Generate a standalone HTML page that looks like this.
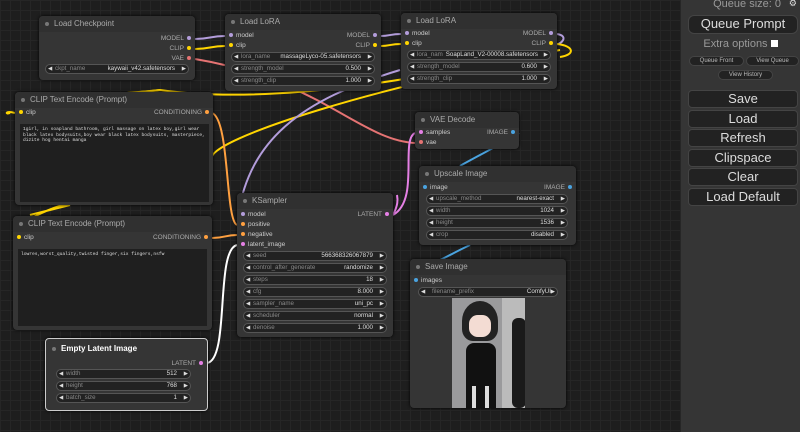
<!DOCTYPE html>
<html><head><meta charset="utf-8">
<style>
*{box-sizing:border-box;margin:0;padding:0}
body{width:800px;height:432px;overflow:hidden;background:#1e1e1e;font-family:"Liberation Sans",sans-serif;position:relative;
background-image:linear-gradient(#262626 1px,transparent 1px),linear-gradient(90deg,#262626 1px,transparent 1px);background-size:10px 10px}
.n{position:absolute;background:#353535;border-radius:4px;box-shadow:0 0 3px #000}
.t{position:absolute;left:0;right:0;top:0;height:16px;background:#303030;border-radius:4px 4px 0 0;color:#aaa;font-size:8px;line-height:16px;padding-left:15px}
.t:before{content:"";position:absolute;left:6px;top:6px;width:4px;height:4px;border-radius:50%;background:#777}
.s{position:absolute;font-size:6.5px;color:#ccc;line-height:8px}
.in{left:4px}.in:before{content:"";display:inline-block;width:4px;height:4px;border-radius:50%;background:var(--c);margin-right:3px;vertical-align:0}
.out{right:4px;color:#aaa}.out:after{content:"";display:inline-block;width:4px;height:4px;border-radius:50%;background:var(--c);margin-left:3px;vertical-align:0}
.w{position:absolute;height:10px;background:#222;border:1px solid #555;border-radius:5px;font-size:6.2px;line-height:8px;color:#888;padding:0 10px 0 9px}
.w:before{content:"◀";position:absolute;left:2px;color:#ddd;font-size:5.5px}
.w:after{content:"▶";position:absolute;right:2px;color:#ddd;font-size:5.5px}
.w b{position:absolute;right:13px;color:#ddd;font-weight:normal}
.ta{position:absolute;background:#1f1f1f;font-family:"Liberation Mono",monospace;font-size:4.6px;color:#ddd;padding:3px;line-height:5.5px}
.p{position:absolute;right:0;top:0;width:119px;height:432px;background:#353535;color:#ddd;text-align:center}
.b{position:absolute;left:7px;width:110px;background:#222;border:1px solid #444;border-radius:4px;font-size:13px;line-height:16px;color:#ddd}
.sb{position:absolute;height:10px;background:#222;border:1px solid #444;border-radius:5px;font-size:6px;line-height:8px;color:#bbb}
</style></head><body>
<svg width="800" height="432" style="position:absolute;left:0;top:0" fill="none" stroke-width="2">
<path d="M195 39 C210 39 210 36 225 36" stroke="#b39ddb"/>
<path d="M195 49 C210 49 210 46 225 46" stroke="#ffd500"/>
<path d="M381 36 C390 36 390 34 401 34" stroke="#b39ddb"/>
<path d="M381 46 C390 46 390 44 401 44" stroke="#ffd500"/>
<path d="M195 59 C320 80 360 140 415 143" stroke="#e57373"/>
<path d="M557 34 C570 36 560 45 557 44" stroke="#b39ddb"/>
<path d="M557 44 C575 46 575 55 560 57" stroke="#ffd500"/>
<path d="M560 50 C500 60 300 110 160 90 L140 92" stroke="#ffd500"/>
<path d="M555 55 C400 80 200 140 212 160" stroke="#ffd500"/>
<path d="M400 70 C300 100 250 140 238 215" stroke="#b39ddb"/>
<path d="M160 90 C120 95 60 95 30 100" stroke="#ffd500"/>
<path d="M15 113 C5 110 5 115 10 113" stroke="#ffd500"/>
<path d="M80 200 C40 210 15 225 14 238 M70 205 L30 215" stroke="#ffd500"/>
<path d="M212 113 C230 120 225 220 237 225" stroke="#ffa040"/>
<path d="M212 238 C225 238 225 235 237 235" stroke="#ffa040"/>
<path d="M207 363 C230 360 215 250 237 245" stroke="#fff"/>
<path d="M393 215 C420 200 400 140 415 133" stroke="#e580e5"/>
<path d="M519 133 C500 145 470 160 460 166" stroke="#4aa3df"/>
<path d="M470 245 C455 252 445 258 440 260" stroke="#4aa3df"/>
<path d="M393 215 C398 205 398 200 397 195" stroke="#e580e5"/>
</svg>

<div class="n" style="left:39px;top:16px;width:156px;height:64px"><div class="t">Load Checkpoint</div>
<div class="s out" style="--c:#b39ddb;top:19px">MODEL</div><div class="s out" style="--c:#ffd500;top:29px">CLIP</div><div class="s out" style="--c:#e57373;top:39px">VAE</div>
<div class="w" style="left:6px;right:6px;top:48px">ckpt_name<b>kaywaii_v42.safetensors</b></div></div>

<div class="n" style="left:225px;top:14px;width:156px;height:77px"><div class="t">Load LoRA</div>
<div class="s in" style="--c:#b39ddb;top:18px">model</div><div class="s in" style="--c:#ffd500;top:28px">clip</div>
<div class="s out" style="--c:#b39ddb;top:18px">MODEL</div><div class="s out" style="--c:#ffd500;top:28px">CLIP</div>
<div class="w" style="left:6px;right:6px;top:38px">lora_name<b>massageLyco-05.safetensors</b></div>
<div class="w" style="left:6px;right:6px;top:50px">strength_model<b>0.500</b></div>
<div class="w" style="left:6px;right:6px;top:62px">strength_clip<b>1.000</b></div></div>

<div class="n" style="left:401px;top:13px;width:156px;height:76px"><div class="t">Load LoRA</div>
<div class="s in" style="--c:#b39ddb;top:17px">model</div><div class="s in" style="--c:#ffd500;top:27px">clip</div>
<div class="s out" style="--c:#b39ddb;top:17px">MODEL</div><div class="s out" style="--c:#ffd500;top:27px">CLIP</div>
<div class="w" style="left:6px;right:6px;top:37px">lora_nam<b style="right:12px">SoapLand_V2-00008.safetensors</b></div>
<div class="w" style="left:6px;right:6px;top:49px">strength_model<b>0.600</b></div>
<div class="w" style="left:6px;right:6px;top:61px">strength_clip<b>1.000</b></div></div>

<div class="n" style="left:15px;top:92px;width:198px;height:113px"><div class="t">CLIP Text Encode (Prompt)</div>
<div class="s in" style="--c:#ffd500;top:17px">clip</div><div class="s out" style="--c:#ffa040;top:17px">CONDITIONING</div>
<div class="ta" style="left:5px;top:32px;width:189px;height:78px">1girl, in soapland bathroom, girl massage on latex boy,girl wear black latex bodysuits,boy wear black latex bodysuits, masterpiece, dizite hog hentai manga</div></div>

<div class="n" style="left:13px;top:216px;width:199px;height:114px"><div class="t">CLIP Text Encode (Prompt)</div>
<div class="s in" style="--c:#ffd500;top:18px">clip</div><div class="s out" style="--c:#ffa040;top:18px">CONDITIONING</div>
<div class="ta" style="left:5px;top:33px;width:189px;height:77px">lowres,worst_quality,twisted finger,six fingers,nsfw</div></div>

<div class="n" style="left:237px;top:193px;width:156px;height:144px"><div class="t">KSampler</div>
<div class="s in" style="--c:#b39ddb;top:18px">model</div><div class="s in" style="--c:#ffa040;top:28px">positive</div><div class="s in" style="--c:#ffa040;top:38px">negative</div><div class="s in" style="--c:#e580e5;top:48px">latent_image</div>
<div class="s out" style="--c:#e580e5;top:18px">LATENT</div>
<div class="w" style="left:6px;right:6px;top:58px">seed<b>566368326067879</b></div>
<div class="w" style="left:6px;right:6px;top:70px">control_after_generate<b>randomize</b></div>
<div class="w" style="left:6px;right:6px;top:82px">steps<b>18</b></div>
<div class="w" style="left:6px;right:6px;top:94px">cfg<b>8.000</b></div>
<div class="w" style="left:6px;right:6px;top:106px">sampler_name<b>uni_pc</b></div>
<div class="w" style="left:6px;right:6px;top:118px">scheduler<b>normal</b></div>
<div class="w" style="left:6px;right:6px;top:130px">denoise<b>1.000</b></div></div>

<div class="n" style="left:45px;top:338px;width:163px;height:73px;border:1px solid #ccc"><div class="t" style="color:#fff;font-weight:bold;top:2px;background:#353535">Empty Latent Image</div>
<div class="s out" style="--c:#e580e5;top:21px">LATENT</div>
<div class="w" style="left:10px;right:16px;top:30px">width<b>512</b></div>
<div class="w" style="left:10px;right:16px;top:42px">height<b>768</b></div>
<div class="w" style="left:10px;right:16px;top:54px">batch_size<b>1</b></div></div>

<div class="n" style="left:415px;top:112px;width:104px;height:37px"><div class="t">VAE Decode</div>
<div class="s in" style="--c:#e580e5;top:17px">samples</div><div class="s in" style="--c:#e57373;top:27px">vae</div>
<div class="s out" style="--c:#4aa3df;top:17px">IMAGE</div></div>

<div class="n" style="left:419px;top:166px;width:157px;height:79px"><div class="t">Upscale Image</div>
<div class="s in" style="--c:#4aa3df;top:18px">image</div><div class="s out" style="--c:#4aa3df;top:18px">IMAGE</div>
<div class="w" style="left:7px;right:8px;top:28px">upscale_method<b>nearest-exact</b></div>
<div class="w" style="left:7px;right:8px;top:40px">width<b>1024</b></div>
<div class="w" style="left:7px;right:8px;top:52px">height<b>1536</b></div>
<div class="w" style="left:7px;right:8px;top:64px">crop<b>disabled</b></div></div>

<div class="n" style="left:410px;top:259px;width:156px;height:149px"><div class="t">Save Image</div>
<div class="s in" style="--c:#4aa3df;top:18px">images</div>
<div class="w" style="left:8px;right:8px;top:28px;padding-left:13px">filename_prefix<b style="right:6px">ComfyUI</b></div>
<div style="position:absolute;left:42px;top:39px;width:73px;height:110px;background:#9a9a9c;overflow:hidden">
<div style="position:absolute;left:50px;top:0;width:23px;height:110px;background:#bbb"></div>
<div style="position:absolute;left:60px;top:20px;width:14px;height:90px;background:#1a1a1a;border-radius:6px"></div>
<div style="position:absolute;left:10px;top:3px;width:36px;height:40px;background:#222;border-radius:50% 50% 30% 30%"></div>
<div style="position:absolute;left:17px;top:17px;width:22px;height:22px;background:#f3dcd3;border-radius:40%"></div>
<div style="position:absolute;left:14px;top:45px;width:30px;height:65px;background:#111;border-radius:8px 8px 0 0"></div>
<div style="position:absolute;left:20px;top:88px;width:4px;height:22px;background:#ddd"></div>
<div style="position:absolute;left:33px;top:88px;width:4px;height:22px;background:#ddd"></div>
</div></div>

<div class="p">
<div style="position:absolute;left:0;top:-2px;width:100px;font-size:11px;color:#999;text-align:right">Queue size: 0</div>
<div style="position:absolute;right:3px;top:-2px;font-size:9px;color:#ddd">⚙</div>
<div class="b" style="top:15px;height:19px;border-radius:6px">Queue Prompt</div>
<div style="position:absolute;left:0;width:119px;top:37px;font-size:11px;color:#999;line-height:14px">Extra options <span style="display:inline-block;width:7px;height:7px;background:#fff;vertical-align:0"></span></div>
<div class="sb" style="left:8px;width:55px;top:56px">Queue Front</div>
<div class="sb" style="left:65px;width:53px;top:56px">View Queue</div>
<div class="sb" style="left:37px;width:55px;top:70px">View History</div>
<div class="b" style="top:90px;height:18px">Save</div>
<div class="b" style="top:110px;height:18px">Load</div>
<div class="b" style="top:129px;height:18px">Refresh</div>
<div class="b" style="top:149px;height:18px">Clipspace</div>
<div class="b" style="top:168px;height:18px">Clear</div>
<div class="b" style="top:188px;height:18px">Load Default</div>
</div>
</body></html>
